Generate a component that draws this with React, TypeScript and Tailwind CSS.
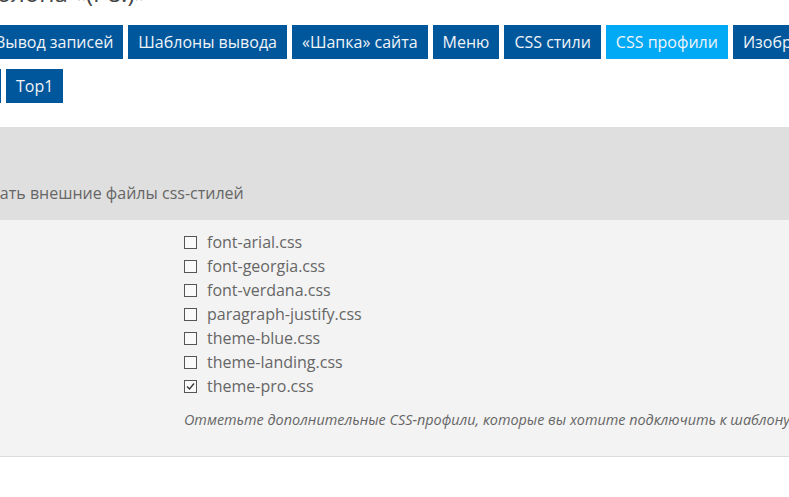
import React from "react";

const row1 = ["Вывод записей", "Шаблоны вывода", "«Шапка» сайта", "Меню", "CSS стили", "CSS профили", "Изображения", "Подвал"];
const files = [
  { name: "font-arial.css", checked: false },
  { name: "font-georgia.css", checked: false },
  { name: "font-verdana.css", checked: false },
  { name: "paragraph-justify.css", checked: false },
  { name: "theme-blue.css", checked: false },
  { name: "theme-landing.css", checked: false },
  { name: "theme-pro.css", checked: true },
];

function Box({ checked }: { checked: boolean }) {
  return (
    <span className="flex-none w-[13px] h-[13px] border border-[#555] bg-[#fafafa] flex items-center justify-center">
      {checked && (
        <svg width="11" height="11" viewBox="0 0 11 11">
          <path d="M2 5.5 L4.5 8 L9 2.5" fill="none" stroke="#333" strokeWidth="1.3" />
        </svg>
      )}
    </span>
  );
}

export default function App() {
  return (
    <div className="w-[789px] h-[497px] overflow-hidden bg-white font-['Open_Sans',sans-serif]">
      <div className="mt-[-22px] ml-[-170px] text-[24px] leading-[30px] text-[#444] whitespace-nowrap">
        Настройки шаблона «(Р8.)»
      </div>
      <div className="mt-[17px] ml-[-15px] flex gap-[5px]">
        {row1.map((t) => (
          <div
            key={t}
            className={`flex-none h-[34px] px-[10px] flex items-center text-[16px] text-[#f0f4f8] whitespace-nowrap ${
              t === "CSS профили" ? "bg-[#02a9f4]" : "bg-[#00579c]"
            }`}
          >
            {t}
          </div>
        ))}
      </div>
      <div className="mt-[10px] ml-[-86px] flex gap-[5px]">
        <div className="flex-none w-[87px] h-[34px] px-[10px] flex items-center text-[16px] text-[#f0f4f8] bg-[#00579c] whitespace-nowrap">
          Виджеты
        </div>
        <div className="flex-none h-[34px] px-[10px] flex items-center text-[16px] text-[#f0f4f8] bg-[#00579c]">
          Top1
        </div>
      </div>
      <div className="mt-[24px] h-[93px] bg-[#dfdfdf] flex items-end pb-[16px]">
        <span className="ml-[-71px] text-[16px] leading-[22px] text-[#666] whitespace-nowrap">
          Подключать внешние файлы css-стилей
        </span>
      </div>
      <div className="h-[237px] bg-[#f3f3f3] border-b border-[#dcdcdc] pl-[184px] pt-[10px]">
        <div className="flex flex-col">
          {files.map((f) => (
            <label key={f.name} className="h-[24px] flex items-center gap-[10px] text-[16px] text-[#666] whitespace-nowrap">
              <Box checked={f.checked} />
              <span>{f.name}</span>
            </label>
          ))}
        </div>
        <div className="mt-[12px] text-[14.4px] leading-[20px] italic text-[#666] whitespace-nowrap">
          Отметьте дополнительные CSS-профили, которые вы хотите подключить к шаблону
        </div>
      </div>
    </div>
  );
}
